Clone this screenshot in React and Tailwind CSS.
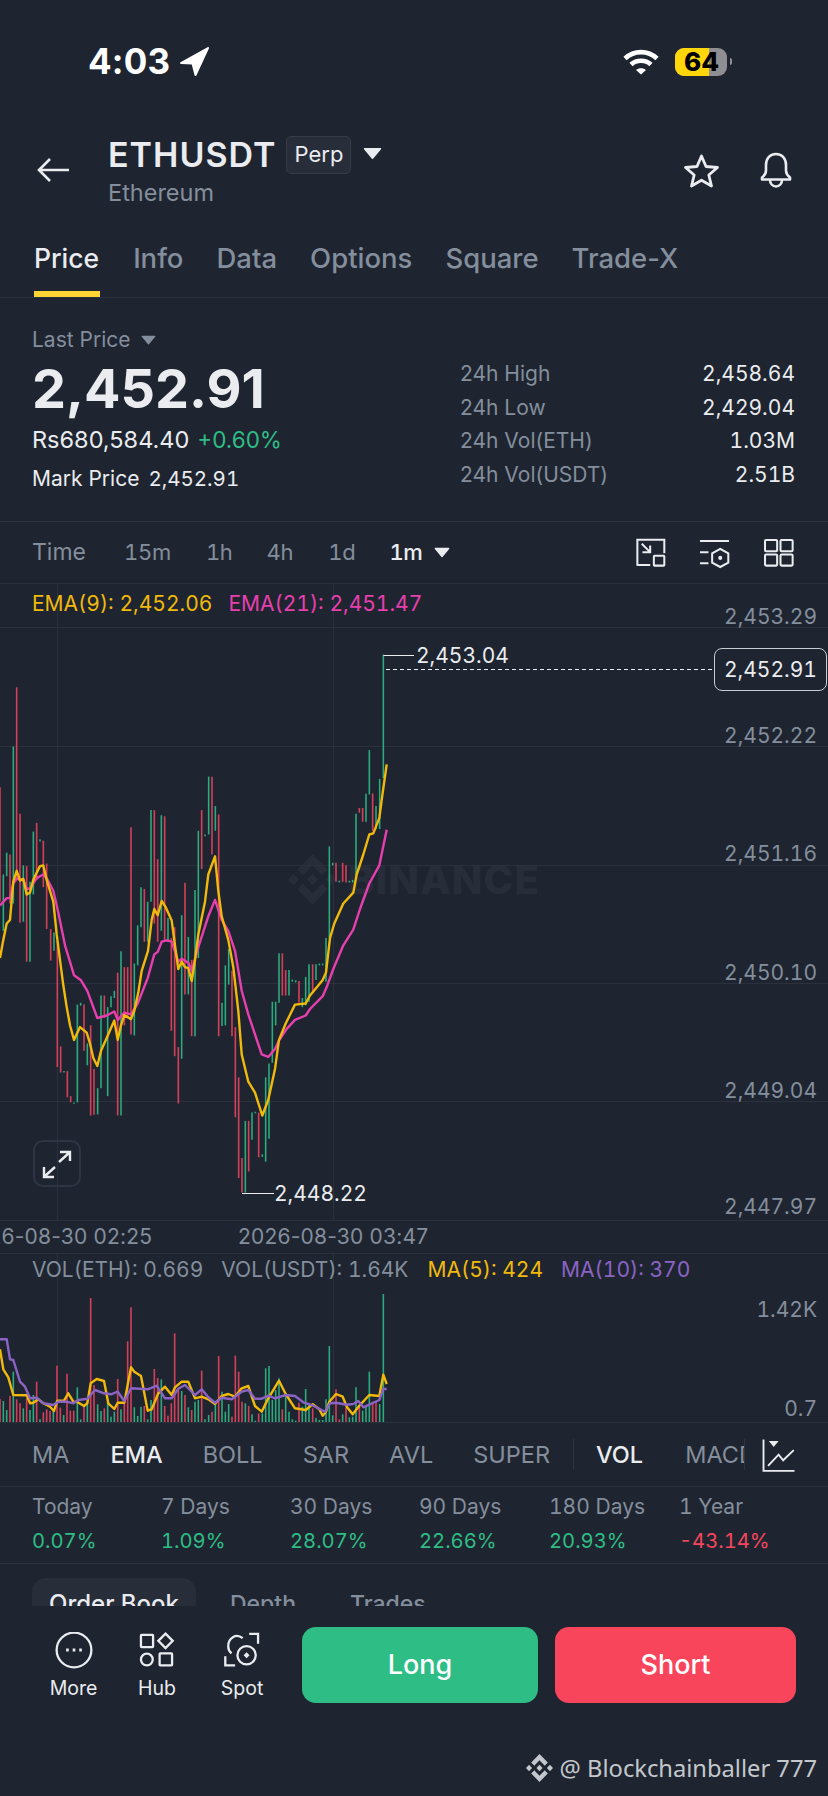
import React from 'react'

const GREEN = '#2bab7e'
const RED = '#d4405a'

// chart traced from the screenshot, [x, top, bottom, g/r] in crop coords (x*3, y*2.751)
const candles = [
  [0,405,720,'r'],[10,645,800,'g'],[20,585,650,'g'],[30,590,725,'r'],[40,293,725,'g'],[50,130,660,'r'],[60,478,778,'r'],[70,620,775,'g'],
  [80,622,885,'r'],[90,665,885,'g'],[100,527,700,'g'],[110,503,660,'r'],[120,548,554,'g'],[130,552,680,'r'],[140,615,795,'r'],[152,795,882,'r'],
  [162,805,855,'g'],[172,830,1175,'r'],[182,1118,1190,'r'],[192,1186,1190,'g'],[202,1186,1258,'r'],[212,1255,1272,'r'],[222,1272,1276,'g'],
  [232,1003,1272,'g'],[242,998,1006,'g'],[252,1003,1130,'r'],[262,1110,1170,'g'],[272,1060,1308,'r'],[282,1180,1306,'r'],[293,1233,1305,'g'],
  [303,978,1233,'g'],[313,978,1040,'r'],[323,1010,1255,'g'],[333,980,1010,'g'],[343,965,985,'g'],[353,915,1308,'r'],[363,856,1308,'g'],
  [373,900,1060,'r'],[383,900,1040,'r'],[393,515,1085,'r'],[403,890,1088,'g'],[413,785,895,'g'],[423,680,790,'g'],[433,685,830,'r'],
  [443,720,830,'g'],[453,468,720,'g'],[463,468,780,'r'],[473,603,830,'r'],[484,482,800,'g'],[494,485,825,'r'],[504,765,830,'g'],
  [514,820,1075,'r'],[524,790,1145,'r'],[535,1120,1275,'r'],[545,757,1152,'g'],[555,668,975,'r'],[565,817,975,'g'],[575,880,1090,'r'],
  [585,688,1090,'g'],[595,525,875,'g'],[605,468,630,'r'],[615,535,540,'g'],[626,376,535,'g'],[636,376,590,'r'],[646,457,525,'g'],
  [656,480,1090,'r'],[666,998,1062,'g'],[676,895,1060,'g'],[686,850,948,'g'],[696,910,1090,'r'],[706,1065,1313,'r'],[716,1203,1480,'r'],
  [726,1425,1520,'r'],[736,1323,1520,'g'],[746,1323,1462,'r'],[756,1300,1375,'g'],[766,1298,1302,'g'],[776,1300,1423,'r'],[787,1415,1422,'g'],
  [797,1203,1435,'g'],[807,1165,1372,'g'],[817,995,1163,'g'],[827,995,1060,'g'],[837,862,998,'g'],[847,862,978,'r'],[857,908,978,'r'],
  [867,908,978,'g'],[877,934,940,'g'],[887,936,942,'g'],[897,938,998,'r'],[907,985,1010,'g'],[917,927,1005,'g'],[927,892,995,'g'],
  [938,892,972,'r'],[948,892,935,'g'],[958,890,895,'g'],[968,890,895,'g'],[978,820,940,'g'],[988,568,820,'g'],[998,613,620,'g'],
  [1008,613,665,'r'],[1018,662,667,'g'],[1028,613,665,'r'],[1038,620,667,'r'],[1048,662,667,'g'],[1058,660,667,'g'],[1068,478,660,'g'],
  [1078,462,475,'r'],[1088,462,500,'r'],[1098,423,500,'g'],[1108,303,425,'g'],[1118,422,525,'r'],[1128,457,520,'g'],[1139,382,520,'g'],[1150,40,380,'g'],
]

const ema9 = [0,875,10,825,20,780,30,770,40,665,50,635,60,662,70,657,80,700,90,695,100,660,110,640,120,622,130,620,140,660,150,690,160,720,170,810,180,880,190,950,200,1010,210,1060,222,1100,240,1065,260,1080,270,1110,280,1150,292,1172,303,1130,320,1095,343,1047,353,1100,363,1060,373,1032,393,1043,403,1020,415,970,425,910,444,855,455,770,463,740,473,757,485,718,497,735,515,772,525,840,535,905,545,885,555,900,565,903,575,938,585,880,595,810,615,720,625,645,645,595,655,690,665,760,685,825,700,900,715,1020,725,1140,745,1215,765,1245,787,1308,805,1265,825,1180,837,1100,857,1055,885,1003,917,1000,930,978,948,958,968,935,978,915,990,820,1003,780,1030,725,1060,695,1070,645,1090,590,1108,535,1120,532,1138,490,1148,420,1160,342]

const ema21 = [0,730,20,710,30,710,40,670,50,657,70,660,80,685,90,683,110,655,130,645,140,655,160,690,175,750,195,840,222,922,242,935,262,965,292,1040,320,1033,343,1022,353,1045,373,1025,393,1030,413,1000,443,930,463,865,473,858,485,830,500,826,515,830,535,885,545,877,565,888,575,910,595,845,625,760,645,715,665,770,685,800,705,855,725,965,745,1030,765,1085,785,1140,805,1147,825,1125,837,1102,860,1070,885,1045,917,1033,930,1015,968,980,980,955,1000,905,1030,840,1060,797,1080,740,1108,670,1138,620,1160,522]

const volBars = [
  [0,327,'r'],[10,333,'g'],[20,360,'g'],[30,318,'r'],[40,245,'g'],[50,328,'r'],[60,340,'r'],[70,355,'g'],[80,325,'r'],[90,360,'g'],[100,315,'g'],[110,275,'r'],
  [120,388,'g'],[130,367,'r'],[140,358,'r'],[150,363,'r'],[160,362,'g'],[171,227,'r'],[181,353,'r'],[191,375,'g'],[201,251,'r'],[211,362,'r'],[221,362,'r'],
  [232,292,'g'],[242,388,'g'],[252,345,'r'],[262,340,'g'],[272,24,'r'],[282,285,'r'],[293,343,'g'],[303,363,'g'],[313,355,'r'],[323,335,'g'],[333,380,'g'],
  [343,365,'g'],[353,267,'r'],[363,358,'g'],[373,338,'r'],[383,154,'r'],[393,52,'r'],[403,352,'g'],[413,378,'g'],[423,350,'g'],[433,348,'r'],[443,388,'g'],
  [453,330,'g'],[463,237,'r'],[473,264,'r'],[484,268,'g'],[494,348,'r'],[504,377,'r'],[514,340,'r'],[524,130,'r'],[535,295,'r'],[545,303,'g'],[555,315,'r'],
  [565,352,'g'],[575,360,'r'],[585,335,'g'],[595,330,'g'],[605,242,'r'],[615,388,'g'],[626,375,'g'],[636,365,'r'],[646,340,'g'],[656,198,'r'],[666,305,'g'],
  [676,365,'g'],[686,342,'g'],[696,380,'r'],[706,197,'r'],[716,245,'r'],[726,335,'r'],[736,340,'g'],[746,348,'r'],[756,373,'g'],[766,392,'g'],[776,370,'r'],
  [787,370,'g'],[797,235,'g'],[807,228,'g'],[817,330,'g'],[827,300,'g'],[837,265,'g'],[847,358,'r'],[857,310,'g'],[867,365,'g'],[877,388,'g'],[887,392,'g'],
  [897,338,'r'],[907,350,'g'],[917,297,'g'],[927,340,'g'],[938,355,'r'],[948,384,'g'],[958,390,'g'],[968,390,'g'],[978,328,'g'],[988,168,'g'],[998,376,'g'],
  [1008,298,'r'],[1018,388,'r'],[1028,373,'g'],[1038,353,'r'],[1048,382,'g'],[1058,380,'g'],[1068,292,'g'],[1078,345,'r'],[1088,362,'g'],[1098,350,'g'],
  [1108,245,'g'],[1118,335,'r'],[1128,335,'r'],[1139,342,'g'],[1150,12,'g'],
]

const volMa5 = [0,178,10,238,25,262,40,315,80,316,90,340,100,338,115,328,130,340,150,350,162,363,172,332,192,332,205,310,220,335,232,336,252,348,262,340,272,280,290,267,312,273,325,340,343,357,353,338,373,338,393,232,403,245,423,258,443,362,455,358,475,310,495,290,515,315,525,292,545,275,565,275,585,325,605,320,625,328,645,342,665,318,685,312,705,320,725,295,745,288,765,348,785,365,805,325,837,272,857,312,885,355,917,360,938,343,958,358,968,377,978,365,988,335,1008,312,1028,320,1040,350,1058,373,1078,347,1108,315,1138,318,1150,254,1160,282]

const volMa10 = [0,148,20,148,30,208,40,210,60,275,75,290,90,325,110,323,130,340,160,345,175,335,200,335,220,340,235,330,262,326,285,300,312,310,333,313,353,305,373,333,393,295,443,298,470,287,495,325,515,325,535,296,555,285,585,315,605,298,625,322,645,338,665,323,695,328,725,305,745,300,765,326,785,326,805,317,825,325,857,315,885,318,910,337,940,347,975,365,990,340,1008,338,1040,344,1060,342,1075,333,1090,352,1138,330,1150,297,1160,297]

const toPoints = (arr, offY, sy) => {
  let out = []
  for (let i = 0; i < arr.length; i += 2) {
    out.push((arr[i] / 3).toFixed(1) + ',' + (offY + arr[i + 1] / sy).toFixed(1))
  }
  return out.join(' ')
}

const BinanceLogo = ({ className, fill }) => (
  <svg viewBox="0 0 126.61 126.61" className={className} fill={fill} preserveAspectRatio="none">
    <path d="M38.73 53.2l24.59-24.58 24.6 24.6 14.3-14.31L63.32 0 24.43 38.9l14.3 14.3zM0 63.31l14.3-14.31 14.31 14.31-14.31 14.3zM38.73 73.41l24.59 24.59 24.6-24.6 14.31 14.29-38.9 38.91-38.91-38.88v-.03zM98.01 63.31l14.3-14.3 14.3 14.3-14.3 14.31zM77.83 63.3L63.32 48.78 52.59 59.51l-1.23 1.24-2.54 2.54 14.5 14.51 14.51-14.5z" />
  </svg>
)

const Tri = ({ className, fill = '#eaecef' }) => (
  <svg viewBox="0 0 18 12" className={className} fill={fill} stroke={fill} strokeWidth="1.5" strokeLinejoin="round">
    <path d="M1.5 1.5h15L9 10.5z" />
  </svg>
)

const StatusBar = () => (
  <div className="h-[124px] flex items-center justify-between pl-[88px] pr-[96px] pb-[1px]">
    <div className="flex items-center gap-[9px]">
      <span className="text-[35px] leading-none font-bold text-white tracking-[0.2px]">4:03</span>
      <svg width="31" height="31" viewBox="0 0 31 31" fill="white" stroke="white" strokeWidth="2" strokeLinejoin="round">
        <path d="M29 2 L2 17 L13.5 17.5 L16.5 29 Z" />
      </svg>
    </div>
    <div className="flex items-center gap-[16px]">
      <svg width="36" height="26" viewBox="0 0 36 26" fill="none" stroke="white" strokeWidth="4.6">
        <path d="M2 9.5 C11 1 25 1 34 9.5" />
        <path d="M8 15.5 C13.5 10.5 22.5 10.5 28 15.5" />
        <path d="M13 21 L18 25.5 L23 21 C20 18.6 16 18.6 13 21 Z" fill="white" stroke="none" />
      </svg>
      <div className="relative flex items-center">
        <div className="w-[52px] h-[28px] rounded-[9px] overflow-hidden flex bg-[#8e8e93]">
          <div className="w-[34px] h-full bg-[#ffd60a]"></div>
        </div>
        <span className="absolute left-[9px] top-0 w-[34px] text-center text-[26px] leading-[28px] font-extrabold text-black">64</span>
        <div className="ml-[3px] w-[2px] h-[7px] rounded-r-full bg-[#8e8e93]"></div>
      </div>
    </div>
  </div>
)

const Header = () => (
  <div className="h-[104px] flex items-start pl-[37px] pr-[35px]">
    <svg width="32" height="26" viewBox="0 0 32 26" fill="none" stroke="#eaecef" strokeWidth="2.6" className="mt-[33px]">
      <path d="M32 13H3M13 2 2 13l11 11" />
    </svg>
    <div className="ml-[39px] flex flex-col">
      <div className="flex items-center mt-[11px]">
        <span className="text-[34px] leading-[40px] font-semibold tracking-[1px] text-[#eaecef]">ETHUSDT</span>
        <span className="ml-[10px] w-[65px] h-[38px] flex items-center justify-center rounded-[5px] bg-[#272d39] border border-[#353b47] text-[22px] pb-[2px] text-[#eaecef]">Perp</span>
        <Tri className="ml-[12px] w-[19px] h-[13px] mb-[4px]" />
      </div>
      <span className="mt-[4px] text-[23.5px] leading-[28px] text-[#848e9c]">Ethereum</span>
    </div>
    <div className="ml-auto flex items-center gap-[39px] mt-[28px]">
      <svg width="37" height="35" viewBox="0 0 37 35" fill="none" stroke="#eaecef" strokeWidth="2.8" strokeLinejoin="round">
        <path d="M18.5 3 L23 13.5 L34.5 14.5 L25.8 22 L28.5 33 L18.5 27.2 L8.5 33 L11.2 22 L2.5 14.5 L14 13.5 Z" />
      </svg>
      <svg width="34" height="36" viewBox="0 0 34 36" fill="none" stroke="#eaecef" strokeWidth="2.6" strokeLinejoin="round">
        <path d="M17 2C10.5 2 7 7 7 13v5.5c0 3-1.5 5-4 7v2h28v-2c-2.5-2-4-4-4-7V13c0-6-3.5-11-10-11z" />
        <path d="M11 27.5c0 4 2.5 7 6 7s6-3 6-7" />
      </svg>
    </div>
  </div>
)

const tabs = ['Price', 'Info', 'Data', 'Options', 'Square', 'Trade-X']

const Tabs = () => (
  <div className="h-[70px] border-b border-[#2b313c] flex items-start gap-[33px] pl-[34px]">
    {tabs.map((t, i) => (
      <div key={t} className={i == 0 ? 'relative h-[69px] flex items-start pt-[14px] text-[#eaecef] font-medium text-[26.5px] mr-[1px]' : 'h-[69px] flex items-start pt-[14px] text-[#848e9c] font-medium text-[27.5px]'}>
        <span className="leading-[32px]">{t}</span>
        {i == 0 && <div className="absolute left-0 -right-[1px] bottom-0 h-[6px] bg-[#fcd535]"></div>}
      </div>
    ))}
  </div>
)

const stats = [
  ['24h High', '2,458.64'],
  ['24h Low', '2,429.04'],
  ['24h Vol(ETH)', '1.03M'],
  ['24h Vol(USDT)', '2.51B'],
]

const PriceSection = () => (
  <div className="h-[224px] border-b border-[#2f3540] flex pl-[32px] pr-[33px]">
    <div className="flex flex-col">
      <div className="flex items-center mt-[28px] gap-[10px]">
        <span className="text-[21px] leading-[28px] text-[#848e9c]">Last Price</span>
        <Tri className="w-[15px] h-[10px]" fill="#848e9c" />
      </div>
      <span className="mt-[5px] text-[54px] leading-[60px] font-bold text-[#eaecef]">2,452.91</span>
      <div className="mt-[6px] flex items-center gap-[8px] text-[22.5px] leading-[30px]">
        <span className="text-[#eaecef] text-[23.5px]">Rs680,584.40</span>
        <span className="text-[#2ebd85]">+0.60%</span>
      </div>
      <div className="mt-[9px] flex items-center gap-[9px] text-[21px] leading-[30px] text-[#eaecef]">
        <span>Mark Price</span>
        <span className="tabular-nums text-[20.5px]">2,452.91</span>
      </div>
    </div>
    <div className="ml-auto w-[335px] mt-[59px] flex flex-col">
      {stats.map(([k, v]) => (
        <div key={k} className="h-[33.7px] flex items-center justify-between text-[21px]">
          <span className="text-[#848e9c]">{k}</span>
          <span className="text-[#eaecef] tabular-nums">{v}</span>
        </div>
      ))}
    </div>
  </div>
)

const TimeRow = () => (
  <div className="h-[62px] border-b border-[#2b313c] flex items-center pl-[32px] pr-[33px] text-[22px] tracking-[-0.3px] tabular-nums">
    <span className="text-[#848e9c] text-[23px] tracking-normal">Time</span>
    <span className="ml-[38px] text-[#848e9c]">15m</span>
    <span className="ml-[35px] text-[#848e9c]">1h</span>
    <span className="ml-[34px] text-[#848e9c]">4h</span>
    <span className="ml-[35px] text-[#848e9c]">1d</span>
    <span className="ml-[34px] text-[#eaecef] font-medium">1m</span>
    <Tri className="ml-[11px] w-[16px] h-[11px]" />
    <div className="ml-auto flex items-center gap-[32px]">
      <svg width="32" height="32" viewBox="40 20 95 95" fill="none" stroke="#eaecef" strokeWidth="6">
        <path d="M47 105V28H127V68M47 103H85M60 40 85 65M85 45V65H62" />
        <rect x="96" y="76" width="31" height="29" rx="2" />
      </svg>
      <svg width="32" height="32" viewBox="237 20 95 95" fill="none" stroke="#eaecef" strokeWidth="6">
        <path d="M240 32H326M240 65H265M240 98H265" />
        <path d="M300 55 L324 68.5 V96 L300 109 L276 96 V68.5 Z" />
        <circle cx="300" cy="82" r="6" fill="#eaecef" stroke="none" />
      </svg>
      <svg width="32" height="32" viewBox="432 20 95 95" fill="none" stroke="#eaecef" strokeWidth="6">
        <rect x="438" y="29" width="36" height="33" rx="3" />
        <rect x="484" y="29" width="36" height="33" rx="3" />
        <rect x="438" y="72" width="36" height="33" rx="3" />
        <rect x="484" y="72" width="36" height="33" rx="3" />
      </svg>
    </div>
  </div>
)

// page y of the label centres, minus chart top and half a line
const axisLabels = [
  ['2,453.29', 19],
  ['2,452.22', 138],
  ['2,451.16', 256],
  ['2,450.10', 375],
  ['2,449.04', 493],
  ['2,447.97', 609],
]

const Chart = () => (
  <div className="relative h-[637px] border-b border-[#2b313c] overflow-hidden">
    <div className="absolute left-[288px] top-[270px] flex items-center gap-[11px]">
      <BinanceLogo className="w-[49px] h-[51px]" fill="#272e3a" />
      <span className="text-[40px] leading-[46px] font-extrabold text-[#272e3a] tracking-[1.1px]">BINANCE</span>
    </div>
    <svg viewBox="0 584 828 636" className="absolute left-0 top-0 w-[828px] h-[636px]" fill="none">
      {[627, 746, 865, 983, 1101].map((y) => (
        <path key={y} d={`M0 ${y}.5H828`} stroke="#2b313c" strokeWidth="1" />
      ))}
      <path d="M57.5 584V1220M333.5 584V1220" stroke="#2b313c" strokeWidth="1" />
      {candles.map(([x, a, b, c], i) => (
        <line key={i} x1={x / 3} x2={x / 3} y1={640 + a / 2.751} y2={640 + b / 2.751} stroke={c == 'g' ? GREEN : RED} strokeWidth="1.6" />
      ))}
      <polyline points={toPoints(ema21, 640, 2.751)} stroke="#e83fae" strokeWidth="2.4" strokeLinejoin="round" />
      <polyline points={toPoints(ema9, 640, 2.751)} stroke="#f0b90b" strokeWidth="2.4" strokeLinejoin="round" />
      <path d="M383.5 655.5H414M242 1193.5H274" stroke="#eaecef" strokeWidth="1" />
      <path d="M386 669.5H714" stroke="#eaecef" strokeWidth="1" strokeDasharray="4 3" />
    </svg>
    <div className="absolute left-[32px] top-[6px] flex gap-[16px] text-[21px] leading-[28px] tabular-nums">
      <span className="text-[#f0b90b]">EMA(9): 2,452.06</span>
      <span className="text-[#e83fae]">EMA(21): 2,451.47</span>
    </div>
    {axisLabels.map(([t, top]) => (
      <span key={t} className="absolute right-[11px] text-[21px] leading-[28px] tabular-nums text-[#848e9c]" style={{ top: top }}>{t}</span>
    ))}
    <span className="absolute left-[416px] top-[58px] text-[21px] leading-[28px] tabular-nums text-[#eaecef]">2,453.04</span>
    <span className="absolute left-[274px] top-[596px] text-[21px] leading-[28px] tabular-nums text-[#eaecef]">2,448.22</span>
    <div className="absolute left-[714px] top-[64px] w-[113px] h-[43px] rounded-[8px] border border-[#c9ccd2] bg-[#1e2530] flex items-center justify-center text-[21px] tabular-nums text-[#eaecef]">2,452.91</div>
    <div className="absolute left-[33px] top-[556px] w-[48px] h-[47px] rounded-[10px] border-2 border-[#2f3542] flex items-center justify-center">
      <svg width="30" height="30" viewBox="0 0 30 30" fill="none" stroke="#eaecef" strokeWidth="2.4">
        <path d="M17 13 27 4M18 3H28V12M13 18 3 27M12 28H2V18" />
      </svg>
    </div>
  </div>
)

const TimeAxis = () => (
  <div className="relative h-[33px] border-b border-[#2b313c] text-[21px] leading-[32px] tracking-[0.2px] text-[#848e9c] overflow-hidden">
    <span className="absolute left-[-38px] top-0 whitespace-nowrap">2026-08-30 02:25</span>
    <span className="absolute left-[238px] top-0 whitespace-nowrap">2026-08-30 03:47</span>
  </div>
)

const Volume = () => (
  <div className="relative h-[169px] border-b border-[#2b313c] overflow-hidden">
    <svg viewBox="0 1254 828 168" className="absolute left-0 top-0 w-[828px] h-[168px]" fill="none">
      <path d="M57.5 1254V1422M333.5 1254V1422" stroke="#2b313c" strokeWidth="1" />
      {volBars.map(([x, t, c], i) => (
        <line key={i} x1={x / 3} x2={x / 3} y1={1290 + t / 3} y2={1422.5} stroke={c == 'g' ? GREEN : RED} strokeWidth="1.6" />
      ))}
      <polyline points={toPoints(volMa5, 1290, 3)} stroke="#f0b90b" strokeWidth="2.4" strokeLinejoin="round" />
      <polyline points={toPoints(volMa10, 1290, 3)} stroke="#8a63c4" strokeWidth="2.4" strokeLinejoin="round" />
    </svg>
    <div className="absolute left-[32px] top-[2px] flex text-[21px] leading-[28px] tabular-nums">
      <span className="text-[#848e9c]">VOL(ETH): 0.669</span>
      <span className="ml-[18px] text-[#848e9c]">VOL(USDT): 1.64K</span>
      <span className="ml-[19px] text-[#f0b90b]">MA(5): 424</span>
      <span className="ml-[18px] text-[#8a63c4]">MA(10): 370</span>
    </div>
    <span className="absolute right-[11px] top-[42px] text-[21px] leading-[28px] tabular-nums text-[#848e9c]">1.42K</span>
    <span className="absolute right-[11px] top-[141px] text-[21px] leading-[28px] tabular-nums text-[#848e9c]">0.7</span>
  </div>
)

const IndicatorRow = () => (
  <div className="h-[64px] border-b border-[#2b313c] flex items-center pl-[32px] text-[23.5px] text-[#848e9c]">
    <span>MA</span>
    <span className="ml-[41px] text-[#eaecef] font-medium">EMA</span>
    <span className="ml-[40px]">BOLL</span>
    <span className="ml-[40px]">SAR</span>
    <span className="ml-[40px]">AVL</span>
    <span className="ml-[40px]">SUPER</span>
    <div className="ml-[23px] w-[1px] h-[31px] bg-[#2f3540]"></div>
    <span className="ml-[22px] text-[#eaecef] font-medium">VOL</span>
    <div className="ml-[42px] w-[60px] h-[31px] overflow-hidden border-r border-[#2f3540] whitespace-nowrap leading-[31px]">MACD</div>
    <svg width="34" height="34" viewBox="74 56 90 90" fill="none" stroke="#eaecef" strokeWidth="5" className="ml-[17px]">
      <path d="M78 60V143H160M90 130 118 100 130 115 158 88" />
      <path d="M92 64H118L105 80Z" fill="#eaecef" stroke="none" />
    </svg>
  </div>
)

const perf = [
  ['Today', '0.07%'],
  ['7 Days', '1.09%'],
  ['30 Days', '28.07%'],
  ['90 Days', '22.66%'],
  ['180 Days', '20.93%'],
  ['1 Year', '-43.14%'],
]

const Perf = () => (
  <div className="h-[77px] border-b border-[#2f3540] grid grid-cols-[129px_129px_129px_130px_130px_1fr] pl-[32px] pt-[3px] text-[21px] leading-[34px] tabular-nums">
    {perf.map(([k, v], i) => (
      <div key={k} className="flex flex-col">
        <span className="text-[#848e9c]">{k}</span>
        <span className={i == 5 ? 'text-[#f6465d] text-[20.2px]' : 'text-[#2ebd85] text-[20.2px]'}>{v}</span>
      </div>
    ))}
  </div>
)

const OrderTabs = () => (
  <div className="h-[42px] overflow-hidden flex items-start pl-[32px] pt-[14px] text-[23px] leading-[28px] font-medium">
    <div className="w-[164px] h-[60px] rounded-t-[14px] bg-[#272d39] pt-[12px] text-center text-[24px] text-[#eaecef]">Order Book</div>
    <span className="ml-[34px] pt-[12px] text-[#848e9c]">Depth</span>
    <span className="ml-[54px] pt-[12px] text-[#848e9c]">Trades</span>
  </div>
)

const BottomBar = () => (
  <div className="h-[120px] flex items-start pl-[32px] pt-[21px]">
    <div className="flex text-[19.5px] leading-[26px] text-[#eaecef]">
      <div className="w-[83px] flex flex-col items-center pt-[5px]">
        <svg width="38" height="38" viewBox="44 36 116 116" fill="none" stroke="#eaecef" strokeWidth="7">
          <circle cx="102" cy="91" r="53" />
          <path d="M78 91h8M98 91h8M118 91h8" strokeWidth="9" />
        </svg>
        <span className="mt-[5px]">More</span>
      </div>
      <div className="w-[84px] flex flex-col items-center pt-[5px]">
        <svg width="38" height="38" viewBox="299 36 116 116" fill="none" stroke="#eaecef" strokeWidth="7">
          <rect x="308" y="45" width="37" height="37" rx="2" />
          <path d="M383 41 405 63 383 85 361 63Z" />
          <circle cx="326" cy="120" r="18" />
          <rect x="365" y="101" width="38" height="37" rx="2" />
        </svg>
        <span className="mt-[5px]">Hub</span>
      </div>
      <div className="w-[86px] flex flex-col items-center pt-[5px]">
        <svg width="38" height="38" viewBox="550 36 116 116" fill="none" stroke="#eaecef" strokeWidth="7">
          <path d="M630 42H657V72M557 110V138H587" />
          <path d="M610 55C590 38 565 55 566 80C566 90 570 96 576 101" />
          <circle cx="622" cy="107" r="28" />
          <path d="M622 98 631 107 622 116 613 107Z" fill="#eaecef" stroke="none" />
        </svg>
        <span className="mt-[5px]">Spot</span>
      </div>
    </div>
    <button className="ml-[17px] w-[236px] h-[76px] rounded-[14px] bg-[#2ebd85] text-[27px] font-medium text-white">Long</button>
    <button className="ml-[17px] w-[241px] h-[76px] rounded-[14px] bg-[#f9455c] text-[27px] font-medium text-white">Short</button>
  </div>
)

const Watermark = () => (
  <div className="flex-1 flex items-start justify-end pr-[11px] pt-[27px]">
    <div className="flex items-center gap-[7px]">
      <BinanceLogo className="w-[27px] h-[28px]" fill="#c4c8cc" />
      <span className="font-['Noto_Sans',sans-serif] text-[23.7px] leading-[30px] text-[#c4c8cc]">@ Blockchainballer 777</span>
    </div>
  </div>
)

const App = () => {
  return (
    <div className="w-[828px] h-[1796px] bg-[#1e2530] flex flex-col overflow-hidden font-['Inter',sans-serif]">
      <StatusBar />
      <Header />
      <Tabs />
      <PriceSection />
      <TimeRow />
      <Chart />
      <TimeAxis />
      <Volume />
      <IndicatorRow />
      <Perf />
      <OrderTabs />
      <BottomBar />
      <Watermark />
    </div>
  )
}

export default App
